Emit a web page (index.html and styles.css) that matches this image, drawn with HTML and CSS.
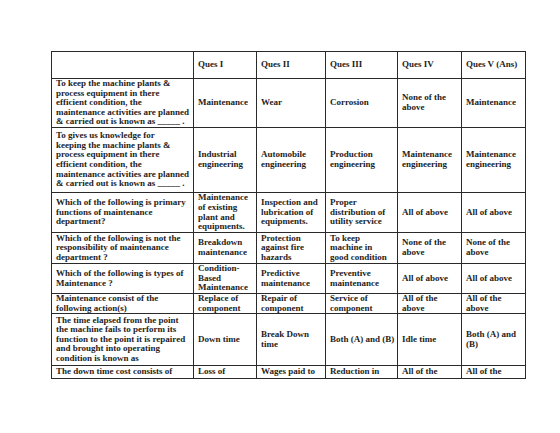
FILE: index.html
```html
<!DOCTYPE html>
<html>
<head>
<meta charset="utf-8">
<link rel="stylesheet" href="styles.css">
</head>
<body>
<div class="page">
  <div class="grid">
    <div class="c h"></div><div class="c h">Ques I</div><div class="c h">Ques II</div><div class="c h">Ques III</div><div class="c h">Ques IV</div><div class="c h">Ques V (Ans)</div>

    <div class="c">To keep the machine plants &amp;<br>process equipment in there<br>efficient condition, the<br>maintenance activities are planned<br>&amp; carried out is known as _____ .</div>
    <div class="c">Maintenance</div><div class="c">Wear</div><div class="c">Corrosion</div><div class="c">None of the<br>above</div><div class="c">Maintenance</div>

    <div class="c">To gives us knowledge for<br>keeping the machine plants &amp;<br>process equipment in there<br>efficient condition, the<br>maintenance activities are planned<br>&amp; carried out is known as _____ .</div>
    <div class="c">Industrial<br>engineering</div><div class="c">Automobile<br>engineering</div><div class="c">Production<br>engineering</div><div class="c">Maintenance<br>engineering</div><div class="c">Maintenance<br>engineering</div>

    <div class="c">Which of the following is primary<br>functions of maintenance<br>department?</div>
    <div class="c">Maintenance<br>of existing<br>plant and<br>equipments.</div><div class="c">Inspection and<br>lubrication of<br>equipments.</div><div class="c">Proper<br>distribution of<br>utility service</div><div class="c">All of above</div><div class="c">All of above</div>

    <div class="c">Which of the following is not the<br>responsibility of maintenance<br>department ?</div>
    <div class="c">Breakdown<br>maintenance</div><div class="c">Protection<br>against fire<br>hazards</div><div class="c">To keep<br>machine in<br>good condition</div><div class="c">None of the<br>above</div><div class="c">None of the<br>above</div>

    <div class="c">Which of the following is types of<br>Maintenance ?</div>
    <div class="c">Condition-<br>Based<br>Maintenance</div><div class="c">Predictive<br>maintenance</div><div class="c">Preventive<br>maintenance</div><div class="c">All of above</div><div class="c">All of above</div>

    <div class="c">Maintenance consist of the<br>following action(s)</div>
    <div class="c">Replace of<br>component</div><div class="c">Repair of<br>component</div><div class="c">Service of<br>component</div><div class="c">All of the<br>above</div><div class="c">All of the<br>above</div>

    <div class="c">The time elapsed from the point<br>the machine fails to perform its<br>function to the point it is repaired<br>and brought into operating<br>condition is known as</div>
    <div class="c">Down time</div><div class="c">Break Down<br>time</div><div class="c">Both (A) and (B)</div><div class="c">Idle time</div><div class="c">Both (A) and<br>(B)</div>

    <div class="c t">The down time cost consists of</div>
    <div class="c t">Loss of</div><div class="c t">Wages paid to</div><div class="c t">Reduction in</div><div class="c t">All of the</div><div class="c t">All of the</div>
  </div>
</div>
</body>
</html>
```

FILE: styles.css
```css
html, body {
  margin: 0;
  padding: 0;
  background: #ffffff;
}
.page {
  padding: 51px 0 0 51px;
}
.grid {
  display: inline-grid;
  grid-template-columns: 141px 62px 68px 71px 63px 63px;
  grid-template-rows: 26px 48px 64px 39px 30px 29px 19px 51px 12px;
  gap: 1px;
  border: 1px solid #2a2a2a;
  background: #2a2a2a;
  font-family: "Liberation Serif", "Times New Roman", serif;
  font-weight: bold;
  font-size: 9px;
  line-height: 9.6px;
  color: #1e1e1e;
}
.c {
  background: #ffffff;
  display: flex;
  align-items: safe center;
  padding: 0 1px 0 4px;
  overflow: hidden;
  white-space: nowrap;
}
.c.t {
  align-items: flex-start;
  padding-top: 1px;
}
```
